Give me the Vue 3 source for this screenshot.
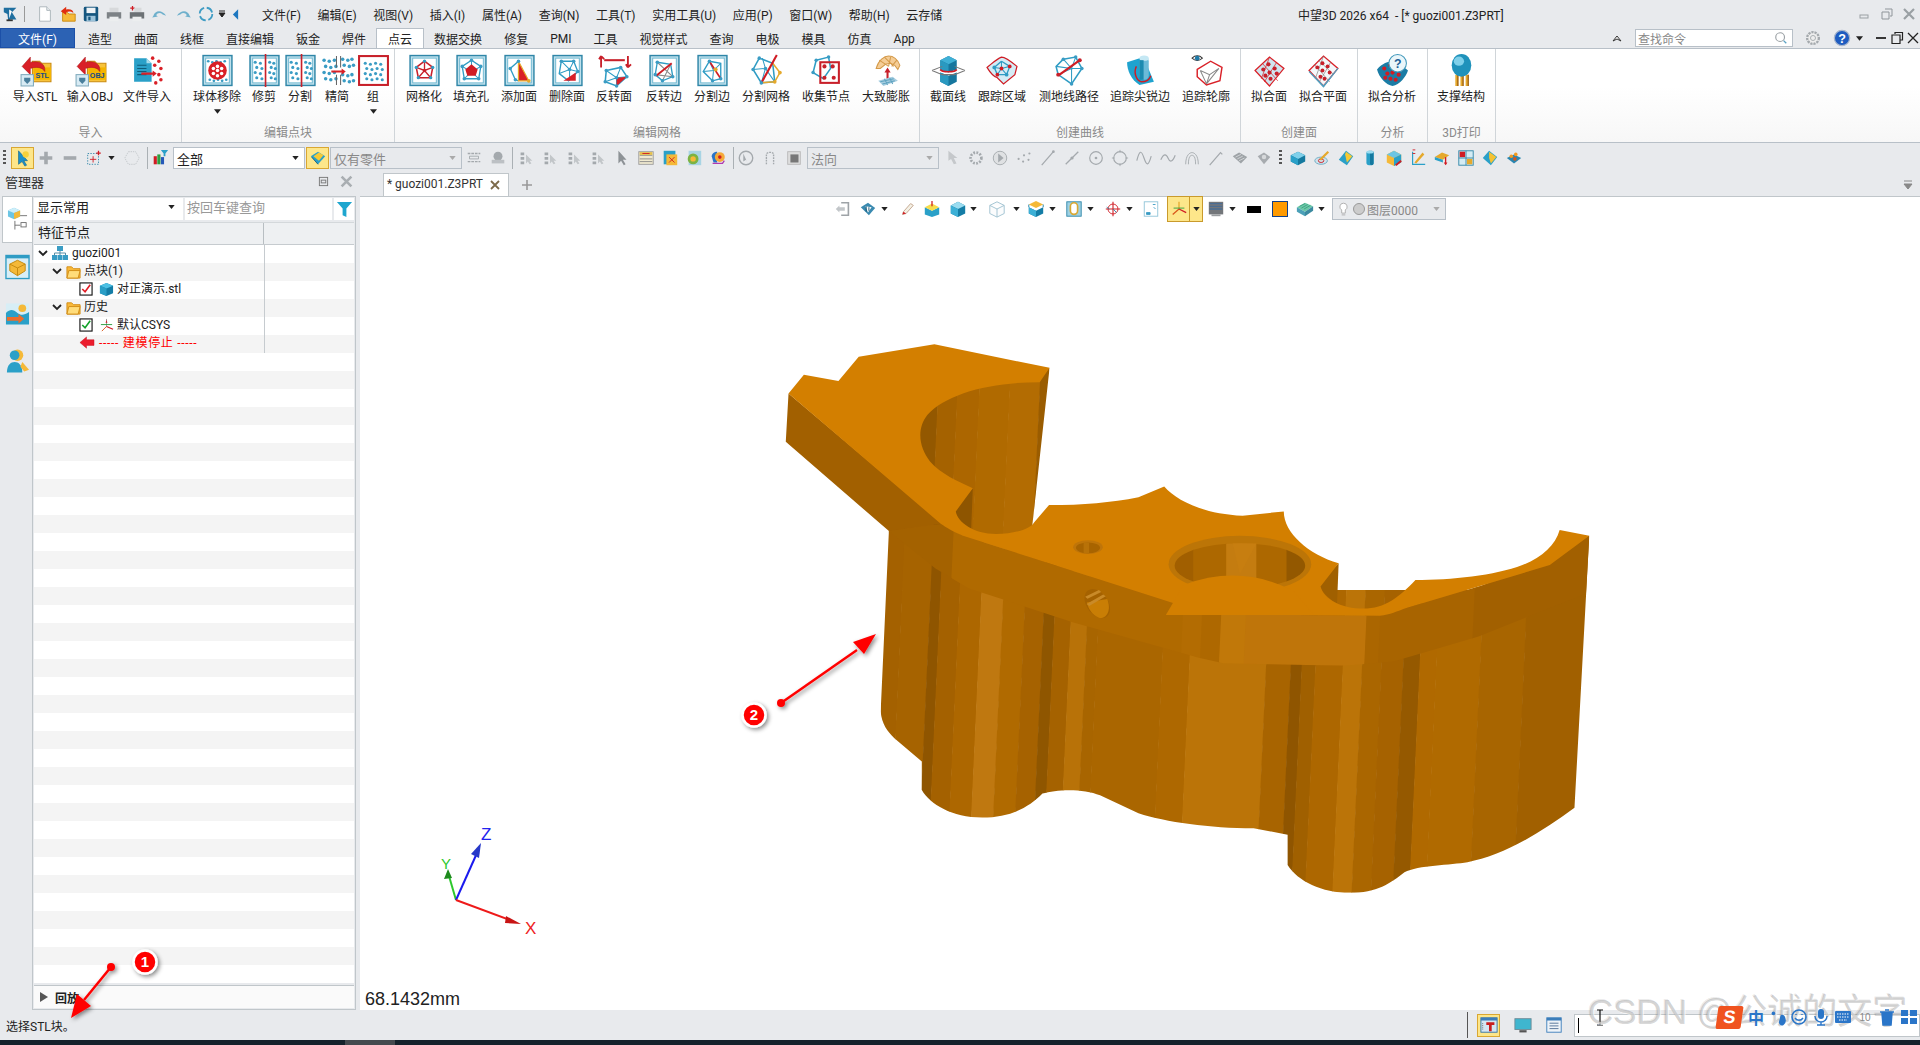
<script setup>
const dot = (x, y, r = 1.7, c = '#3a9cc4') => `<circle cx="${x}" cy="${y}" r="${r}" fill="${c}"/>`
const ln = (p, c = '#3a9cc4', w = 1.3) => `<polyline points="${p}" fill="none" stroke="${c}" stroke-width="${w}"/>`
const tile = (inner, b = '#2f86a8') => `<rect x="2" y="1.5" width="28" height="29" fill="#bfe0ec" stroke="${b}" stroke-width="1.4"/><rect x="4.6" y="4" width="22.8" height="24" fill="#fff" stroke="#5fb0cc" stroke-width=".8"/>${inner}`
const cloud = (xs, ys, r = 1.5) => xs.map((x, i) => ys.map((y, j) => dot(x + (j % 2) * 1.5, y + (i % 2), r)).join('')).join('')
const folderB = '<path d="M13 7h7l2 2h9v18H13z" fill="#f8c33a" stroke="#c98a10"/><rect x="14" y="13" width="17" height="12" fill="#f4b400"/>'
const redBack = '<path d="M3 12l8-9v5c8-2 15 1 14 9-2-4-8-5-14-3v6z" fill="#d92027" stroke="#a5141a" stroke-width=".5"/>'
const smallBox = '<rect x="2" y="20" width="12" height="11" fill="#d8ebf4" stroke="#7fa9bc"/><path d="M5 23h6v3l-3 3-3-3z" fill="#4a7f9c"/>'
const imp = t => folderB + `<text x="22.5" y="23" font-size="7" font-weight="700" text-anchor="middle" fill="#124a8a" font-family="Liberation Sans">${t}</text>` + redBack + smallBox
const R = {
  stl: imp('STL'), obj: imp('OBJ'),
  fimp: '<path d="M3 4h12l5 5v18H3z" fill="#2aa0c8"/><path d="M15 4l5 5h-5z" fill="#a8dcec"/><path d="M6 11h9M6 14h9M6 17h9M6 20h9" stroke="#0e5c7a"/><path d="M10 18h11v-2l4 3-4 3v-2H10z" fill="#d92027"/>' + [[21, 4], [27, 7], [23, 11], [29, 14], [27, 20], [29, 25], [24, 28]].map(p => dot(p[0], p[1], 1.7, '#d92027')).join(''),
  sphere: tile(cloud([7, 11, 15, 19, 23], [7, 25], 1.3) + '<circle cx="16" cy="16" r="9" fill="#d92027"/>' + [[16, 12], [12, 14], [20, 14], [16, 16], [12, 19], [20, 19], [16, 21]].map(p => dot(p[0], p[1], 1.7, '#fff')).join('')),
  trim: '<rect x="1" y="2" width="15" height="27" fill="#d7ecf3"/>' + tile(cloud([7, 12, 21, 25], [8, 13, 18, 23]) + ln('17,0 17,32', '#c8202a', 1.6)),
  split: tile(cloud([7, 12, 21, 25], [8, 13, 18, 23]) + ln('17,0 17,32', '#c8202a', 1.6)),
  slim: cloud([3, 8, 13], [6, 12, 18, 24], 1.7) + cloud([21, 26, 30], [5, 11, 20, 26], 1.7) + '<path d="M15 2v11M15 20v10M19 2v11M19 20v10" stroke="#666"/><path d="M10 16h10v-2l4 3-4 3v-2H10z" fill="#d92027"/>',
  group: '<rect x="2" y="2" width="28" height="28" fill="#fff" stroke="#c8202a" stroke-width="2"/>' + cloud([8, 13, 18, 23], [9, 14, 19, 24]),
  mesh: tile('<polyline points="16,7 24,13 22,23 10,23 8,13 16,7" fill="none" stroke="#c8202a" stroke-width="1.5"/><path d="M16 7v9M8 13l8 3 8-3M10 23l6-7 6 7" stroke="#c8202a" fill="none" stroke-width="1.3"/>' + dot(16, 7, 1.6, '#2f9cc4') + dot(24, 13, 1.6, '#2f9cc4') + dot(22, 23, 1.6, '#2f9cc4') + dot(10, 23, 1.6, '#2f9cc4') + dot(8, 13, 1.6, '#2f9cc4') + dot(16, 16, 1.6, '#c8202a')),
  fill: tile('<polyline points="16,6 25,12 23,24 9,24 7,12 16,6" fill="none" stroke="#2f9cc4" stroke-width="1.3"/><path d="M16 6v5M7 12l5 3M25 12l-5 3M9 24l4-4M23 24l-4-4" stroke="#2f9cc4"/><path d="M16 10l6 5-2 6h-8l-2-6z" fill="#d01c24"/>' + dot(16, 6) + dot(25, 12) + dot(23, 24) + dot(9, 24) + dot(7, 12)),
  addf: tile('<path d="M15 7l10 19H15z" fill="#d92027"/><polyline points="15,7 7,14 12,25 15,26" fill="none" stroke="#2f9cc4" stroke-width="1.3"/><polyline points="15,7 25,26 15,26 15,7" fill="none" stroke="#e5a92c" stroke-width="1.2"/>' + dot(15, 7) + dot(7, 14) + dot(12, 25) + dot(25, 26, 1.8, '#e5a92c')),
  delf: tile('<polyline points="10,7 22,7 26,17 17,26 8,19 10,7" fill="none" stroke="#2f9cc4" stroke-width="1.3"/><path d="M10 7l8 8 4-8M8 19l10-4 8 2M18 15v11" stroke="#2f9cc4" fill="none"/><path d="M12 26l12-8v8z" fill="#d92027"/>' + dot(10, 7) + dot(22, 7) + dot(26, 17) + dot(18, 15)),
  revf: '<path d="M3 2v11M3 2l-2 3M3 2l3 3M29 2v11M29 13l-2-3M29 13l3-3" stroke="#c8202a" stroke-width="1.8" fill="none"/><path d="M6 6h20" stroke="#c8202a" stroke-width="2"/><polyline points="8,16 22,13 28,22 18,31 7,27 8,16" fill="none" stroke="#2f9cc4" stroke-width="1.5"/><path d="M8 16l10 7 4-10M7 27l11-4v8M18 23l10-1" stroke="#2f9cc4" fill="none"/><path d="M18 23l10-1-10 9z" fill="#d92027"/>' + dot(8, 16) + dot(22, 13) + dot(28, 22) + dot(18, 31) + dot(7, 27) + dot(18, 23),
  reve: tile('<polyline points="9,8 22,10 24,22 14,26 7,20 9,8" fill="none" stroke="#2f9cc4" stroke-width="1.3"/><path d="M9 8l15 14M14 26l8-16M7 20l17 2" stroke="#8a8a8a" fill="none"/><path d="M8 21L23 9" stroke="#d01c24" stroke-width="1.8"/>' + dot(9, 8) + dot(24, 22) + dot(14, 26) + dot(7, 20)),
  spe: tile('<polyline points="13,7 24,9 24,24 16,26 7,17 13,7" fill="none" stroke="#2f9cc4" stroke-width="1.3"/><path d="M13 7l4 9-10 1M17 16l-1 10M17 16l7-7" stroke="#2f9cc4" fill="none"/><path d="M13 7l11 17" stroke="#d01c24" stroke-width="1.6"/>' + dot(19, 15, 2, '#e5a92c') + dot(13, 7) + dot(24, 24) + dot(16, 26)),
  spm: '<polyline points="9,4 22,9 24,27 11,28 3,15 9,4" fill="none" stroke="#2f9cc4" stroke-width="1.5"/><path d="M3 15l12-1-3-10M15 14l-4 14M15 14l9 13" stroke="#2f9cc4" fill="none"/><path d="M22 9l7 9-5 9-13 1" stroke="#e5a92c" fill="none" stroke-width="1.5"/><path d="M26 1L11 28" stroke="#d01c24" stroke-width="2"/>' + dot(9, 4) + dot(3, 15) + dot(15, 14) + dot(11, 28) + dot(29, 18, 1.8, '#e5a92c') + dot(24, 27, 1.8, '#e5a92c'),
  col: '<polyline points="6,6 18,3 20,14 13,24 3,18 6,6" fill="none" stroke="#2f9cc4" stroke-width="1.5"/><rect x="10" y="8" width="18" height="20" fill="none" stroke="#c8202a" stroke-width="2"/>' + dot(14, 12, 2, '#c8202a') + dot(22, 12, 2, '#c8202a') + dot(14, 23, 2, '#c8202a') + dot(23, 23, 2, '#c8202a') + dot(6, 6) + dot(18, 3) + dot(3, 18),
  infl: '<path d="M6 14C8 6 14 2 18 2c5 0 9 4 11 9l-2 4-3-4-4-2-5 1-5 4z" fill="#f5cd96" stroke="#d49a4a"/><path d="M9 6l9 6M14 3l9 9M20 3l-2 9M26 6l-5 6" stroke="#d49a4a" fill="none"/><path d="M16 24v-6h-2l3-5 3 5h-2v6z" fill="#c8202a"/><path d="M8 26l14-4 5 4-14 5z" fill="#a6cde0"/><path d="M10 27l13-3M12 29l12-3M14 24l3 6M19 23l3 6" stroke="#5fa3c0"/>',
  sect: '<path d="M8 6l8-4 8 4v9l-8 3-8-3z" fill="#16769e"/><path d="M8 6l8 4 8-4-8-4z" fill="#3fb0d6"/><path d="M8 6l8 4v8l-8-3z" fill="#2a99c0"/><path d="M8 18l8 3 8-3v9l-8 4-8-4z" fill="#16769e"/><path d="M8 18l8 3v10l-8-4z" fill="#2a99c0"/><path d="M0 16l10-4M32 16l-10-4M0 16l10 4h12l10-4" stroke="#777" fill="none"/><path d="M8 15c2 3 14 3 16 0" stroke="#d01c24" stroke-width="1.6" fill="none"/>',
  trace: '<path d="M1 13C6 9 10 5 15 3c4 0 9 4 15 9l-2 8-11 9-6-6c-4-1-7-5-10-10z" fill="#d4ecf5" stroke="#d01c24" stroke-width="1.2"/><polyline points="15,7 23,12 20,20 11,20 8,13 15,7" fill="none" stroke="#2f9cc4" stroke-width="1.3"/><path d="M15 7v7M8 13l7 1 8-2M11 20l4-6 5 6" stroke="#2f9cc4" fill="none"/>' + dot(15, 14, 1.9, '#d01c24') + dot(8, 13, 1.8, '#2f9cc4') + dot(23, 12, 1.8, '#d01c24') + dot(11, 20, 1.8, '#d01c24') + dot(20, 20, 1.8, '#2f9cc4'),
  geod: '<polyline points="10,5 22,3 28,14 18,29 5,20 3,12 10,5" fill="none" stroke="#2f9cc4" stroke-width="1.5"/><path d="M10 5l8 9-15-2M22 3l-4 11 10 0M18 14l0 15M5 20l13-6" stroke="#2f9cc4" fill="none"/><path d="M5 21L26 6" stroke="#d01c24" stroke-width="2.2"/>' + dot(10, 5) + dot(22, 3) + dot(28, 14) + dot(18, 29) + dot(5, 20, 1.9, '#c8202a') + dot(26, 6, 1.9, '#c8202a'),
  sharp: '<path d="M3 8l16-5 10 24-14 3C7 25 3 16 3 8z" fill="#1fa3cf"/><rect x="15" y="3" width="9" height="22" rx="4" fill="#6bbad8"/><ellipse cx="19.500" cy="4" rx="4.500" ry="2.500" fill="#c5e8f4"/><rect x="15" y="6" width="4" height="19" fill="#1c8ab0"/><path d="M12 12c-3 6 0 14 5 15 5 0 8-3 9-6" stroke="#d01c24" stroke-width="1.4" fill="none"/>',
  outline: '<path d="M2 4c3-3 7-3 10 0-3 3-7 3-10 0z" fill="#fff" stroke="#333"/><circle cx="7" cy="4" r="2.300" fill="#1f7aa8"/><polygon points="7,15 20,7 31,13 29,26 16,30 7,22" fill="#fff" stroke="#d92027" stroke-width="1.4"/><path d="M10 16l9 4 9-6M19 20l-3 9M10 16l6 13M28 14l-12 15" stroke="#888" fill="none"/>',
  fitf: '<path d="M2 16L16 3l14 11-14 17z" fill="#cfe6f0" stroke="#d92027" stroke-width="1.2"/><path d="M9 9l15 17M16 3l-8 21M23 8L11 27" stroke="#d92027" stroke-width=".7" fill="none"/>' + [[10, 15], [15, 10], [21, 14], [16, 18], [23, 19], [12, 21], [17, 24]].map(p => dot(p[0], p[1], 2, '#c8202a')).join(''),
  fitp: '<path d="M2 16L16 2l14 12-14 17z" fill="#f4f8fa" stroke="#d92027" stroke-width="1.2"/><path d="M7 10l15 17M11 6l15 14M16 2L8 24M23 8L12 27" stroke="#777" stroke-width=".6" fill="none"/><path d="M2 17l14 14 14-17-14 18z" fill="#8cc7dd" stroke="#4fa0c0"/>' + [[10, 13], [15, 9], [20, 12], [15, 16], [22, 18], [13, 22], [17, 24]].map(p => dot(p[0], p[1], 1.9, '#c8202a')).join(''),
  ana: '<path d="M1 15C6 9 12 7 16 7c4 2 10 4 15 9-2 6-8 14-15 15C10 30 3 23 1 15z" fill="#1a7ca5"/>' + [[8, 14], [14, 11], [19, 13], [24, 15], [11, 19], [16, 18], [22, 20], [14, 24], [19, 25], [9, 23]].map(p => dot(p[0], p[1], 2, '#d01c24')).join('') + '<circle cx="21" cy="9" r="8.500" fill="#eaf6fa" stroke="#3f97ba"/><text x="21" y="13.500" text-anchor="middle" font-size="12" font-weight="700" font-family="Liberation Sans" fill="#1c5f96">?</text>',
  sup: '<path d="M10 20h3v11h-3zM15 21h3v10h-3zM20 20h3v11h-3z" fill="#e5a92c"/><path d="M12 20h1v11h-1zM17 21h1v10h-1zM22 20h1v11h-1z" fill="#8a4d0c"/><ellipse cx="16" cy="11" rx="9.500" ry="11" fill="#1f92bb"/><ellipse cx="13.500" cy="7" rx="5" ry="4.500" fill="#7fd0ea"/>'
}
const ribbon = [
  { l: '导入', a: 0, b: 182, items: [['导入STL', 35, 'stl', 44], ['输入OBJ', 90, 'obj', 44], ['文件导入', 147, 'fimp']] },
  { l: '编辑点块', a: 182, b: 395, items: [['球体移除', 217, 'sphere', 0, 1], ['修剪', 264, 'trim'], ['分割', 300, 'split'], ['精简', 337, 'slim'], ['组', 373, 'group', 0, 1]] },
  { l: '编辑网格', a: 395, b: 920, items: [['网格化', 424, 'mesh'], ['填充孔', 471, 'fill'], ['添加面', 519, 'addf'], ['删除面', 567, 'delf'], ['反转面', 614, 'revf'], ['反转边', 664, 'reve'], ['分割边', 712, 'spe'], ['分割网格', 766, 'spm'], ['收集节点', 826, 'col'], ['大致膨胀', 886, 'infl']] },
  { l: '创建曲线', a: 920, b: 1241, items: [['截面线', 948, 'sect'], ['跟踪区域', 1002, 'trace'], ['测地线路径', 1069, 'geod'], ['追踪尖锐边', 1140, 'sharp'], ['追踪轮廓', 1206, 'outline']] },
  { l: '创建面', a: 1241, b: 1358, items: [['拟合面', 1269, 'fitf'], ['拟合平面', 1323, 'fitp']] },
  { l: '分析', a: 1358, b: 1428, items: [['拟合分析', 1392, 'ana']] },
  { l: '3D打印', a: 1428, b: 1496, items: [['支撑结构', 1461, 'sup']] }
].map(g => {
  let right = g.a
  return {
    ...g, w: g.b - g.a,
    items: g.items.map(i => {
      const w = i[3] || i[0].length * 12
      const m = i[1] - w / 2 - right
      right = i[1] + w / 2
      return { t: i[0], ic: R[i[2]], w, m, drop: i[4] }
    })
  }
})
const menus = ['文件(F)', '编辑(E)', '视图(V)', '插入(I)', '属性(A)', '查询(N)', '工具(T)', '实用工具(U)', '应用(P)', '窗口(W)', '帮助(H)', '云存储']
const tabs = ['造型', '曲面', '线框', '直接编辑', '钣金', '焊件', '点云', '数据交换', '修复', 'PMI', '工具', '视觉样式', '查询', '电极', '模具', '仿真', 'App']

const G = '#a4a9ad'
const T = {
  sel: '<path d="M5 2v15l4-3 3 5 2-1-3-5h4z" fill="#1a8fc9" stroke="#0b5d86" stroke-width=".6"/><circle cx="13" cy="6" r="3.500" fill="#f7d23a"/>',
  plus: `<path d="M8 3h4v5h5v4h-5v5H8v-5H3V8h5z" fill="${G}"/>`,
  minus: `<rect x="3" y="8" width="14" height="4" fill="${G}"/>`,
  drect: '<rect x="3" y="5" width="12" height="12" fill="none" stroke="#2f86a8" stroke-dasharray="1.500 1.500"/><path d="M9 8v7M5.500 11.500h7" stroke="#d01c24"/><path d="M15 2v5M12.500 4.500h5" stroke="#d01c24" stroke-width="1.4"/>',
  hex: `<polygon points="6,3 14,3 18,10 14,17 6,17 2,10" fill="none" stroke="#c2c6c9" stroke-dasharray="1.500 1"/>`,
  filt: '<rect x="3" y="8" width="3.500" height="9" fill="#d01c24"/><rect x="7" y="6" width="3.500" height="11" fill="#2e9e3f"/><rect x="11" y="9" width="3.500" height="8" fill="#2458b8"/><path d="M11 1h8l-3 4v3h-2V5z" fill="#2aa0c8"/>',
  ybtn: '<path d="M2 8l8-5 8 5-8 9z" fill="#2aa0c8"/><path d="M5 8l6-4 5 3-5 6z" fill="#f6c933"/><path d="M3 9l7 8" stroke="#155b7a"/>',
  g1: `<path d="M3 5h14M3 14h14" stroke="${G}" stroke-width="1.500" stroke-dasharray="3 1"/><path d="M5 8h10v3H5z" fill="none" stroke="${G}"/>`,
  g2: `<circle cx="10" cy="8" r="5" fill="${G}"/><rect x="3" y="12" width="14" height="4" fill="#bcc0c4"/>`,
  g3: `<path d="M4 4h4v3H4zM4 9h4v3H4zM4 14h4v3H4z" fill="${G}"/><path d="M10 6v10l2-2 2 3 2-1-2-3h3z" fill="#c2c6c9"/>`,
  cur: `<path d="M6 2v14l3-3 3 5 2-1-3-5h4z" fill="#8d9296"/>`,
  list: '<rect x="2" y="3" width="16" height="14" fill="#f0ead0" stroke="#9a9a9a"/><path d="M3 7h14M3 11h14M3 14h14" stroke="#888"/><rect x="3" y="3.500" width="14" height="3" fill="#e5c04a"/><path d="M6 5h8" stroke="#d01c24"/>',
  box1: '<rect x="3" y="2" width="13" height="15" fill="#2aa0c8"/><rect x="6" y="6" width="12" height="12" fill="#f5b938"/><path d="M9 9l6 6M15 9l-6 6" stroke="#d01c24"/>',
  box2: '<rect x="4" y="2" width="14" height="16" fill="#a8d4e4"/><circle cx="9" cy="11" r="6" fill="#7cb342"/><circle cx="9" cy="11" r="3" fill="#f5b938"/>',
  box3: '<path d="M3 8c0-3 3-5 6-5v12H5z" fill="#2a74c8"/><circle cx="12" cy="9" r="5.500" fill="#f5a938"/><circle cx="12" cy="9" r="2" fill="#d01c24"/><path d="M4 16h11l2-3" stroke="#b03ab0" fill="none" stroke-width="1.500"/>',
  g4: `<circle cx="10" cy="10" r="7.500" fill="none" stroke="${G}" stroke-width="1.500"/><path d="M7 5v9l3-2 2 4" fill="${G}"/>`,
  g5: `<path d="M6 17V6c0-3 8-3 8 0v11" fill="none" stroke="${G}" stroke-width="1.500" stroke-dasharray="2 1"/>`,
  g6: '<rect x="3" y="3" width="14" height="14" fill="#ddd" stroke="#b8b8b8"/><rect x="6" y="6" width="9" height="9" fill="#777"/>',
  g7: `<path d="M6 2v11l3-2 3 6 3-1-3-6h4z" fill="#c5c8cb"/>`,
  g8: `<circle cx="10" cy="10" r="6" fill="none" stroke="${G}" stroke-width="3" stroke-dasharray="2 1.500"/>`,
  g9: `<circle cx="10" cy="10" r="7.500" fill="#dfe1e3" stroke="${G}"/><path d="M8 5l6 5-6 5z" fill="${G}"/>`,
  g10: `<circle cx="4" cy="11" r="1.200" fill="${G}"/><circle cx="10" cy="7" r="1.200" fill="${G}"/><circle cx="16" cy="5" r="1.200" fill="${G}"/><circle cx="9" cy="14" r="1.200" fill="${G}"/><circle cx="15" cy="12" r="1.200" fill="${G}"/>`,
  g11: `<path d="M3 18L16 3" stroke="${G}" stroke-width="1.400"/><circle cx="16" cy="3" r="1.500" fill="${G}"/>`,
  g12: `<path d="M3 17L17 3" stroke="${G}" stroke-width="1.400"/><circle cx="10" cy="10" r="1.800" fill="${G}"/>`,
  g13: `<circle cx="10" cy="10" r="7" fill="none" stroke="${G}" stroke-width="1.300"/><circle cx="10" cy="10" r="1.500" fill="${G}"/>`,
  g14: `<circle cx="10" cy="10" r="7" fill="none" stroke="${G}" stroke-width="1.300"/><path d="M10 1v3M10 16v3M1 10h3M16 10h3" stroke="${G}"/>`,
  g15: `<path d="M2 13c3-12 5-12 8-3s5 9 8-2" fill="none" stroke="${G}" stroke-width="1.300"/>`,
  g16: `<path d="M2 12c3-7 6-7 8-2s5 5 8-3" fill="none" stroke="${G}" stroke-width="1.300"/>`,
  g17: `<path d="M3 17C3 6 8 4 10 4s7 2 7 13M6 17C6 9 8 7 10 7s4 2 4 10" fill="none" stroke="${G}"/>`,
  g18: `<path d="M3 18L15 4l2 2" stroke="${G}" stroke-width="1.400" fill="none"/>`,
  g19: `<path d="M2 8l7-4 9 5-7 7z" fill="#9ea3a7"/><path d="M5 9l6-3M7 11l6-3M9 13l6-3" stroke="#d6d8da"/>`,
  g20: `<path d="M3 8l7-4 7 5-7 8z" fill="#a7abaf"/><circle cx="10" cy="9" r="2.500" fill="#d6d8da"/>`,
  c1: '<path d="M10 3l8 4v7l-8 4-8-4V7z" fill="#14799f"/><path d="M10 3l8 4-8 4-8-4z" fill="#7fd0ea"/><path d="M2 7l8 4v7l-8-4z" fill="#2aa0c8"/>',
  c2: '<ellipse cx="9" cy="13" rx="7" ry="4" fill="#cfe3ec" stroke="#6aa9c2"/><ellipse cx="9" cy="13" rx="3" ry="2" fill="none" stroke="#d01c24"/><path d="M8 12L17 3" stroke="#e5a92c" stroke-width="2.500"/>',
  c3: '<path d="M10 2l8 6-7 10-9-6z" fill="#2aa0c8"/><path d="M10 3l7 5-6 7-2-9z" fill="#f6c933"/>',
  c4: '<rect x="6" y="2" width="8" height="16" rx="3" fill="#2aa0c8"/><rect x="10" y="2" width="4" height="16" rx="2" fill="#14799f"/><ellipse cx="10" cy="3.500" rx="4" ry="1.500" fill="#9adcf0"/>',
  c5: '<path d="M10 2l8 4v9l-8 4-8-4V6z" fill="#f5b938"/><path d="M10 2l8 4-8 4-8-4z" fill="#6cc5e4"/><path d="M10 10l8-4v9l-8 4z" fill="#2aa0c8"/><path d="M12 18l6-5" stroke="#d01c24" stroke-width="2"/>',
  c6: '<path d="M4 3v14h14" stroke="#2aa0c8" fill="none" stroke-width="1.300"/><path d="M6 15L15 4l2 2-9 10z" fill="#e5a92c"/><path d="M4 5h3M4 1h3" stroke="#d01c24"/>',
  c7: '<path d="M2 9l8-5 8 3-7 5z" fill="#e5a92c"/><path d="M2 9l9 3v3L2 12z" fill="#2aa0c8"/><path d="M14 9v8" stroke="#d01c24" stroke-width="1.500"/><path d="M12 15h4l-2 3z" fill="#d01c24"/>',
  c8: '<rect x="2" y="2" width="16" height="16" fill="#d5ecf4" stroke="#2f86a8"/><path d="M10 2v16M2 10h16" stroke="#2f86a8"/><rect x="3" y="3" width="6" height="6" fill="#d01c24"/><rect x="11" y="11" width="6" height="6" fill="#e5a92c"/>',
  c9: '<path d="M9 2l9 7-7 9-9-8z" fill="#2aa0c8"/><path d="M9 3l8 6-6 7-2-6z" fill="#f5c233"/>',
  c10: '<path d="M2 10l8-4 8 4-8 6z" fill="#2a86b0"/><circle cx="7" cy="8" r="2" fill="#f59a1f"/><circle cx="12" cy="6" r="2" fill="#f59a1f"/><circle cx="11" cy="11" r="2" fill="#d8561a"/>'
}
const V = {
  exit: '<path d="M8 3h8v14H8" fill="none" stroke="#9ea3a7" stroke-width="1.800"/><path d="M2 10l4-4v2h6v4H6v2z" fill="#c2c6c9"/>',
  win: '<path d="M2 8l8-5 8 6-7 8z" fill="#3a8ab0"/><path d="M7 7l7 1-4 6z" fill="#fff"/><path d="M8 7v6M11 8v4" stroke="#14506c"/>',
  pen: '<path d="M5 16l1-3 8-9 3 2-8 9z" fill="#f4f1e6" stroke="#c2a38a"/><path d="M5 16l1-3 3 2z" fill="#d01c24"/>',
  ybox: '<path d="M2 8l8 4 8-4v8l-8 3-8-3z" fill="#2aa0c8"/><path d="M2 8l8-4 8 4-8 4z" fill="#f6dc4a"/><path d="M10 1v6" stroke="#d01c24" stroke-width="1.400"/>',
  bbox: '<path d="M10 2l8 4v9l-8 4-8-4V6z" fill="#147da6"/><path d="M10 2l8 4-8 4-8-4z" fill="#9adcf0"/><path d="M2 6l8 4v9l-8-4z" fill="#3cb0d6"/>',
  wbox: '<path d="M10 2l8 4v9l-8 4-8-4V6zM2 6l8 4 8-4M10 10v9" fill="#fbfcfd" stroke="#9cc0cf"/>',
  hbox: '<path d="M10 1l8 4-8 4-8-4z" fill="#f5b938"/><path d="M2 8l8 4 8-4v7l-8 4-8-4z" fill="#147da6"/><path d="M2 8l8 4v7l-8-4z" fill="#3cb0d6"/><path d="M2 5v3M18 5v3" stroke="#147da6"/>',
  ring: '<rect x="2" y="2" width="16" height="16" fill="#9ed1e4" stroke="#2f86a8"/><rect x="6" y="3" width="8" height="13" rx="4" fill="#fff" stroke="#d9a732" stroke-width="1.800"/>',
  tgt: '<circle cx="10" cy="10" r="5.500" fill="none" stroke="#d01c24"/><path d="M10 2v16M2 10h16" stroke="#d01c24" stroke-width="1.200"/><path d="M3 8l3 2M10 10l4 4" stroke="#2f86a8"/>',
  pic: '<rect x="2.500" y="2" width="15" height="16" fill="#fff" stroke="#8fc4d8"/><path d="M5 14h4v2H5zM12 5h3M13 8l2 2" stroke="#3a9cc4" fill="#3a9cc4"/>',
  axis: '<path d="M10 10V2" stroke="#e5a92c" stroke-width="1.400"/><path d="M10 10l-7 6" stroke="#d8561a" stroke-width="1.400"/><path d="M10 10l8 4" stroke="#d01c24" stroke-width="1.400"/><path d="M4 9h12" stroke="#2e9e3f"/>',
  mon: '<rect x="2" y="2" width="16" height="14" fill="#73767a"/><path d="M3 4h14M3 7h14M3 10h14" stroke="#4b6d93" stroke-width="1.500"/><rect x="5" y="16" width="10" height="2" fill="#9a9da0"/>',
  lay: '<path d="M1 8l9-5 9 4-9 6z" fill="#6cc9a8"/><path d="M1 8l9 5v5l-9-5z" fill="#4ba0b8"/><path d="M10 13l9-6v5l-9 6z" fill="#3b8aa0"/><path d="M4 7l6-3M6 9l7-4M9 10l7-4" stroke="#3d9e80"/>'
}
const flow = (list, start) => {
  let right = start
  return list.map(i => {
    const m = i.c - i.w / 2 - right
    right = i.c + i.w / 2
    return { ...i, m }
  })
}
const s = (c, ic, w = 24) => ({ k: 's', c, w, ic: T[ic] })
const centers = (a, keys) => keys.map((ic, i) => s(a + i * 24, ic))
const toolItems = flow([
  { k: 'grip', c: 5, w: 4 }, { k: 'on', c: 23.5, w: 23, ic: T.sel }, s(47, 'plus'), s(71, 'minus'), s(95, 'drect'), { k: 'ar', c: 112, w: 10 }, s(133, 'hex'),
  { k: 'sep', c: 148, w: 1 }, s(161, 'filt'),
  { k: 'combo', c: 240, w: 132, t: '全部' }, { k: 'on', c: 318.5, w: 23, ic: T.ybtn }, { k: 'combo', c: 397, w: 132, t: '仅有零件', dis: 1 },
  s(475, 'g1'), s(499, 'g2'), { k: 'sep', c: 513, w: 1 },
  ...centers(527, ['g3', 'g3', 'g3', 'g3', 'cur', 'list', 'box1', 'box2', 'box3']),
  { k: 'sep', c: 734, w: 1 },
  ...centers(747, ['g4', 'g5', 'g6']),
  { k: 'combo', c: 874, w: 132, t: '法向', dis: 1 },
  ...centers(953, ['g7', 'g8', 'g9', 'g10', 'g11', 'g12', 'g13', 'g14', 'g15', 'g16', 'g17', 'g18', 'g19', 'g20']),
  { k: 'grip', c: 1282, w: 4 },
  ...centers(1300, ['c1', 'c2', 'c3', 'c4', 'c5', 'c6', 'c7', 'c8', 'c9', 'c10'])
], 0)
const v = (c, ic, w = 22) => ({ k: 's', c, w, ic: V[ic] })
const a = c => ({ k: 'ar', c, w: 8 })
const viewItems = flow([
  v(843, 'exit'), v(868, 'win'), a(884), v(907, 'pen'), v(932, 'ybox'), v(958, 'bbox'), a(973), v(997, 'wbox'), a(1016), v(1036, 'hbox'), a(1052), v(1074, 'ring'), a(1090), v(1113, 'tgt'), a(1129), v(1151, 'pic'),
  { k: 'yel', c: 1185, w: 36, ic: V.axis }, v(1216, 'mon'), a(1232), { k: 'black', c: 1254, w: 14 }, { k: 'orange', c: 1280, w: 16 }, v(1305, 'lay'), a(1321), { k: 'layer', c: 1389, w: 114 }
], 832)

const treeIcons = {
  org: '<rect x="5" y="1" width="6" height="5" fill="#3a9cc4"/><rect x="0" y="10" width="5" height="5" fill="#3a9cc4"/><rect x="5.500" y="10" width="5" height="5" fill="#3a9cc4"/><rect x="11" y="10" width="5" height="5" fill="#3a9cc4"/><path d="M8 6v2M2.500 10V8h11v2M8 8v2" stroke="#5a8ea6" fill="none"/>',
  folder: '<path d="M1 3h5l2 2h7v10H1z" fill="#f9b93a" stroke="#d18c14"/><path d="M3 7h12l-2 8H1z" fill="#ffdc7a" stroke="#d18c14"/>',
  chkR: '<rect x="1" y="1" width="13" height="13" fill="#fff" stroke="#111" stroke-width="1.200"/><path d="M3.500 7.500l3 3L12 3" fill="none" stroke="#e01b24" stroke-width="1.700"/>',
  chkG: '<rect x="1" y="1" width="13" height="13" fill="#fff" stroke="#111" stroke-width="1.200"/><path d="M3.500 7.500l3 3L12 3" fill="none" stroke="#12a12a" stroke-width="1.700"/>',
  cube: '<path d="M8 1l7 3v8l-7 3-7-3V4z" fill="#147da6"/><path d="M8 1l7 3-7 3-7-3z" fill="#4cc0e4"/><path d="M1 4l7 3v8l-7-3z" fill="#2a9ec6"/>',
  csys: '<path d="M8 9V1" stroke="#999"/><path d="M8 9l-5 5" stroke="#d8561a"/><path d="M8 9l7 3" stroke="#d01c24" stroke-width="1.300"/><path d="M2 7h12" stroke="#2e9e3f"/><path d="M8 2l-1 3h2z" fill="#d01c24"/>',
  back: '<path d="M1 7l7-6v3h8v6H8v3z" fill="#ec1c2c" stroke="#c01420" stroke-width=".5"/>'
}
const tree = [
  { ind: 4, chev: 1, ic: 'org', t: 'guozi001', cls: 'root' },
  { ind: 18, chev: 1, ic: 'folder', t: '点块(1)' },
  { ind: 45, chk: 'chkR', ic: 'cube', t: '对正演示.stl' },
  { ind: 18, chev: 1, ic: 'folder', t: '历史' },
  { ind: 45, chk: 'chkG', ic: 'csys', t: '默认CSYS' },
  { ind: 45, ic: 'back', t: '----- 建模停止 -----', cls: 'red', nochk: 1 }
]
const SL = 0.03
const bandPts = (x1, x2, y0, y1, yr) => {
  const f = (x, y) => x - SL * (y - yr)
  return `${f(x1, y0)},${y0} ${f(x2, y0)},${y0} ${f(x2, y1)},${y1} ${f(x1, y1)},${y1}`
}
const mk = (list, y0, y1, yr) => list.map(([x1, x2, fill]) => ({ pts: bandPts(x1, x2 + 1, y0, y1, yr), fill }))
const frontBands = mk([[180, 250, '#a46100'], [250, 302, '#a66300'], [302, 320, '#8f5500'], [320, 355, '#a46100'], [355, 395, '#ad6700'], [395, 435, '#bf7810'], [435, 475, '#b06a00'], [475, 510, '#a66200'], [510, 530, '#8f5600'], [530, 560, '#a56200'], [560, 590, '#b87208'], [590, 610, '#a86500'], [610, 730, '#aa6600'], [730, 780, '#ae6800'], [780, 920, '#bb7408'], [920, 965, '#a86400'], [965, 985, '#8f5500'], [985, 1010, '#a06000'], [1010, 1060, '#ad6700'], [1060, 1095, '#bb7408'], [1095, 1130, '#aa6600'], [1130, 1170, '#a66200'], [1170, 1200, '#955900'], [1200, 1230, '#b06900'], [1230, 1310, '#b06a00'], [1310, 1390, '#a86500'], [1390, 1540, '#a16000']], 450, 1600, 1000)
const chamBands = mk([[200, 345, '#a46200'], [345, 770, '#b06a00'], [770, 805, '#b36c02'], [805, 840, '#ae6800'], [840, 885, '#c17809'], [885, 1105, '#bf750a'], [1105, 1130, '#ab6600'], [1130, 1300, '#a86400'], [1300, 1540, '#a26000']], 500, 950, 800)
const wallBands = mk([[280, 320, '#935800'], [320, 355, '#a56200'], [355, 395, '#ac6600'], [395, 450, '#b06a00'], [450, 505, '#b36c02'], [505, 540, '#9a5c00']], 60, 580, 300)
const holeBands = [[750, 790, '#a15f00'], [790, 850, '#ad6800'], [850, 905, '#c47c10'], [905, 960, '#ad6800'], [960, 1000, '#935800']]
const silhouette = 'M235,535 L220,1040 C222,1075 232,1095 245,1115 L295,1180 L295,1260 C310,1300 350,1337 405,1337 C455,1337 490,1310 515,1270 C540,1258 590,1255 620,1275 L690,1325 C740,1350 820,1367 900,1367 L962,1385 L962,1470 C980,1515 1025,1548 1075,1548 C1125,1548 1150,1520 1175,1490 C1200,1470 1260,1470 1290,1462 C1350,1445 1420,1385 1485,1310 L1512,548 L1300,700 L800,700 L400,500 Z'
const chamfer = '370,548 770,745 850,768 1130,772 1180,750 1440,630 1512,548 1506,710 1310,830 1155,900 1065,912 930,908 845,905 800,890 570,790 380,695 320,640 235,535 330,515'
const topFace = 'M52,150 L80,97 L143,115 L180,47 L318,12 L528,78 L510,118 C420,118 340,150 305,210 C285,250 290,300 310,340 C330,375 360,395 388,415 L357,480 C360,510 390,543 430,543 C470,543 495,525 500,510 L527,462 C590,462 640,455 690,440 L737,410 C760,450 810,488 880,492 L955,480 C955,540 1000,600 1055,625 L1022,690 C1028,725 1060,752 1100,752 C1140,752 1165,720 1195,672 C1260,672 1340,660 1390,630 C1425,610 1450,575 1458,532 L1512,548 L1440,630 L1180,750 C1160,760 1150,770 1130,772 L850,768 C810,765 790,755 770,745 L370,548 C350,535 340,525 330,515 Z'
</script>

<template>
  <div class="app">
    <div class="titlebar">
      <div class="quick">
        <svg class="qi" viewBox="0 0 20 20"><path d="M2 3h14l-5 5 5 8H9l-2 2-1-8-4-2z" fill="#1f6fa0"/><path d="M8 5l3 2-3 8z" fill="#fff"/><path d="M5 16h7v2H5z" fill="#333"/></svg>
        <span class="qbar"></span>
        <svg class="qi q1" viewBox="0 0 20 20"><path d="M4 2h8l4 4v12H4z" fill="#fff" stroke="#a9b2b8"/><path d="M12 2v4h4" fill="#e8edf0" stroke="#a9b2b8"/></svg>
        <svg class="qi" viewBox="0 0 20 20"><path d="M4 8h5l2 2h7v8H4z" fill="#f5b938" stroke="#c98a10"/><path d="M2 7l6-5v3c5-1 8 1 8 4-3-2-5-2-8-1v3z" fill="#e02e10"/></svg>
        <svg class="qi" viewBox="0 0 20 20"><rect x="2" y="2" width="16" height="16" rx="1.500" fill="#15567f"/><rect x="5" y="3" width="10" height="6" fill="#eef2f5"/><rect x="5" y="12" width="10" height="6" fill="#9cc3da"/><rect x="7" y="13" width="2.500" height="4" fill="#15567f"/></svg>
        <svg class="qi" viewBox="0 0 20 20"><rect x="5" y="3" width="10" height="5" fill="#d7d9db"/><path d="M2 8h16v7H2z" fill="#7d8286"/><rect x="5" y="13" width="10" height="5" fill="#eceeef"/></svg>
        <svg class="qi" viewBox="0 0 20 20"><path d="M5 1v5M2.500 3.500h5" stroke="#d01c24" stroke-width="1.400"/><rect x="7" y="3" width="8" height="5" fill="#d7d9db"/><path d="M2 8h16v7H2z" fill="#6c7175"/><rect x="5" y="13" width="10" height="5" fill="#eceeef"/></svg>
        <svg class="qi" viewBox="0 0 20 20"><path d="M3 13C4 6 12 5 17 11l-4-1C10 8 7 9 6 12l2 1-6 2z" fill="#6fb0cc" transform="rotate(8 10 10)"/></svg>
        <svg class="qi" viewBox="0 0 20 20"><path d="M17 13C16 6 8 5 3 11l4-1c3-2 6-1 7 2l-2 1 6 2z" fill="#6fb0cc" transform="rotate(-8 10 10)"/></svg>
        <svg class="qi" viewBox="0 0 20 20"><circle cx="10" cy="10" r="7" fill="none" stroke="#3f9cc4" stroke-width="2" stroke-dasharray="8 3"/></svg>
        <svg class="qs" viewBox="0 0 8 8"><path d="M1 1h6M1 3h6L4 7z" stroke="#222" fill="#222"/></svg>
        <svg class="qb" viewBox="0 0 8 12"><path d="M7 0v12L1 6z" fill="#1d77c0"/></svg>
      </div>
      <div class="menus"><span v-for="m in menus" :key="m" class="menu">{{ m }}</span></div>
      <div class="doc">中望3D 2026 x64 &nbsp;- [* guozi001.Z3PRT]</div>
      <div class="wins">
        <svg class="wc" viewBox="0 0 14 14"><rect x="2" y="8" width="8" height="3" fill="none" stroke="#9aa0a4"/></svg>
        <svg class="wc" viewBox="0 0 14 14"><path d="M5 2h7v7h-2M2 5h7v7H2z" fill="none" stroke="#8f959a"/></svg>
        <svg class="wc" viewBox="0 0 14 14"><path d="M2 2l10 10M12 2L2 12" stroke="#9aa0a4" stroke-width="2.200"/></svg>
      </div>
    </div>
    <div class="tabrow">
      <div class="filetab">文件(F)</div>
      <div class="tabs"><span v-for="t in tabs" :key="t" class="tab" :class="{ active: t === '点云' }">{{ t }}</span></div>
      <div class="tabright">
        <svg class="up" viewBox="0 0 12 12"><path d="M2 9l4-5 4 5-4-2z" fill="#fff" stroke="#333"/></svg>
        <div class="search"><span>查找命令</span><svg viewBox="0 0 16 16"><circle cx="7" cy="7" r="5" fill="#fff" stroke="#9aa0a4" stroke-width="1.300"/><path d="M11 11l3 3" stroke="#5ba2c4" stroke-width="1.600"/></svg></div>
        <svg class="gear" viewBox="0 0 20 20"><circle cx="10" cy="10" r="6.500" fill="#eee" stroke="#a4a9ad" stroke-width="2.600" stroke-dasharray="2.500 1"/><circle cx="10" cy="10" r="2.800" fill="none" stroke="#a4a9ad"/></svg>
        <svg class="help" viewBox="0 0 20 20"><circle cx="10" cy="10" r="8.500" fill="#1e5cc0" stroke="#a8b6cc" stroke-width="1.400"/><text x="10" y="15" text-anchor="middle" font-size="14" font-weight="700" fill="#fff" font-family="Liberation Sans">?</text></svg>
        <svg class="drop" viewBox="0 0 8 5"><path d="M0 0h8L4 5z" fill="#222"/></svg>
        <svg class="wc2" viewBox="0 0 14 14"><path d="M2 7h10" stroke="#222" stroke-width="1.800"/></svg>
        <svg class="wc2" viewBox="0 0 14 14"><path d="M5 3V1.500h7.500V9H10M2 4h8v8.500H2z" fill="none" stroke="#222" stroke-width="1.200"/></svg>
        <svg class="wc2" viewBox="0 0 14 14"><path d="M2 2l10 10M12 2L2 12" stroke="#222" stroke-width="1.300"/></svg>
      </div>
    </div>
    <div class="ribbon">
      <div v-for="g in ribbon" :key="g.l" class="group" :style="{ width: g.w + 'px' }">
        <div class="items">
          <div v-for="i in g.items" :key="i.t" class="item" :style="{ width: i.w + 'px', marginLeft: i.m + 'px' }">
            <svg class="ric" viewBox="0 0 32 32" v-html="i.ic"></svg>
            <span class="rlabel">{{ i.t }}</span>
            <svg v-if="i.drop" class="rdrop" viewBox="0 0 8 5"><path d="M0 0h8L4 5z" fill="#222"/></svg>
          </div>
        </div>
        <div class="glabel">{{ g.l }}</div>
      </div>
    </div>
    <div class="toolbar">
      <template v-for="(t, n) in toolItems" :key="n">
        <span v-if="t.k === 'grip'" class="grip" :style="{ marginLeft: t.m + 'px' }"></span>
        <span v-else-if="t.k === 'sep'" class="sep" :style="{ marginLeft: t.m + 'px' }"></span>
        <span v-else-if="t.k === 'ar'" class="slot" :style="{ marginLeft: t.m + 'px', width: t.w + 'px' }"><svg class="arr" viewBox="0 0 8 5"><path d="M0 0h8L4 5z" fill="#222"/></svg></span>
        <span v-else-if="t.k === 'combo'" class="combo" :class="{ dis: t.dis }" :style="{ marginLeft: t.m + 'px', width: t.w + 'px' }">{{ t.t }}<svg class="arr" viewBox="0 0 8 5"><path d="M0 0h8L4 5z" :fill="t.dis ? '#aaa' : '#222'"/></svg></span>
        <span v-else class="slot" :class="{ on: t.k === 'on' }" :style="{ marginLeft: t.m + 'px', width: t.w + 'px' }"><svg class="tic" viewBox="0 0 20 20" v-html="t.ic"></svg></span>
      </template>
    </div>
    <div class="work">
      <div class="manager">
        <div class="mhead">
          <span>管理器</span>
          <svg viewBox="0 0 12 12" class="mbtn"><rect x="1.500" y="1.500" width="9" height="9" fill="none" stroke="#777"/><rect x="3.500" y="4.500" width="5" height="3" fill="none" stroke="#777"/></svg>
          <svg viewBox="0 0 12 12" class="mbtn m2"><path d="M1.500 1.500l9 9M10.500 1.500l-9 9" stroke="#a9aeb2" stroke-width="2.400"/></svg>
        </div>
        <div class="mbody">
          <div class="side">
            <div class="stab active"><svg viewBox="0 0 26 30"><path d="M9 1l7 3v7l-7 3-7-3V4z" fill="#6cc5e4"/><path d="M9 1l7 3-7 3-7-3z" fill="#cdeef9"/><path d="M9 7l7-3v7l-7 3z" fill="#f2b93a"/><path d="M16 10h8M10 16v10M10 21h6" stroke="#666" fill="none"/><rect x="17" y="18" width="6" height="5" fill="none" stroke="#666"/></svg></div>
            <div class="stab"><svg viewBox="0 0 26 26"><rect x="1" y="1" width="24" height="24" fill="#d9eef6" stroke="#2f9cc4" stroke-width="1.400"/><rect x="1" y="1" width="24" height="3" fill="#2f9cc4"/><path d="M13 6l8 4v7l-8 5-8-5v-7z" fill="#f5b938" stroke="#c68a10"/><path d="M5 10l8 4 8-4M13 14v8" stroke="#c68a10" fill="none"/></svg></div>
            <div class="stab"><svg viewBox="0 0 26 26"><rect x="1" y="2" width="24" height="22" fill="#d7eef6"/><circle cx="18" cy="7" r="4" fill="#f5b938"/><path d="M1 12c5-5 8-3 12 0s7 2 12-1v13H1z" fill="#2aa0c8"/><path d="M2 16h12v-3l6 5-6 5v-3H2z" fill="#ed6d2a"/></svg></div>
            <div class="stab"><svg viewBox="0 0 26 26"><circle cx="13" cy="7" r="6" fill="#f5b938"/><circle cx="10" cy="7" r="5" fill="#2aa0c8"/><path d="M2 25c0-8 4-11 8-11s8 3 8 11z" fill="#2aa0c8"/><path d="M18 14l7 8-5 2-4-5z" fill="#f5b938"/></svg></div>
          </div>
          <div class="panel">
            <div class="frow">
              <div class="fcombo">显示常用<svg class="arr" viewBox="0 0 8 5"><path d="M0 0h8L4 5z" fill="#222"/></svg></div>
              <div class="fsearch">按回车键查询</div>
              <div class="ffun"><svg viewBox="0 0 18 18"><path d="M1 1h16l-6 7v9l-4-2V8z" fill="#1ea6cf"/></svg></div>
            </div>
            <div class="thead"><span class="th1">特征节点</span><span class="th2"></span></div>
            <div class="tree">
              <div v-for="r in tree" :key="r.t" class="row" :style="{ paddingLeft: r.ind + 'px' }">
                <svg v-if="r.chev" class="chev" viewBox="0 0 10 7"><path d="M1 1l4 4 4-4" fill="none" stroke="#222" stroke-width="1.800"/></svg>
                <svg v-if="r.chk" class="chk" viewBox="0 0 15 15" v-html="treeIcons[r.chk]"></svg>
                <svg class="tri" :class="{ org: r.ic === 'org' }" viewBox="0 0 16 16" v-html="treeIcons[r.ic]"></svg>
                <span class="rtext" :class="r.cls">{{ r.t }}</span>
              </div>
              <span class="coldiv"></span>
            </div>
            <div class="replay"><svg viewBox="0 0 8 10"><path d="M0 0l8 5-8 5z" fill="#555"/></svg><b>回放</b></div>
          </div>
        </div>
      </div>
      <div class="right">
        <div class="doctabs">
          <div class="doctab"><span>* guozi001.Z3PRT</span><svg viewBox="0 0 10 10"><path d="M1 1l8 8M9 1l-8 8" stroke="#7c6a4a" stroke-width="1.800"/></svg></div>
          <svg class="newtab" viewBox="0 0 12 12"><path d="M6 1v10M1 6h10" stroke="#999" stroke-width="1.600"/></svg>
          <svg class="tabmenu" viewBox="0 0 10 10"><path d="M1 1h8M1 4h8L5 9z" stroke="#888" fill="#888"/></svg>
        </div>
        <div class="viewport">
          <div class="vtools">
            <template v-for="(t, n) in viewItems" :key="n">
              <span v-if="t.k === 'ar'" class="slot" :style="{ marginLeft: t.m + 'px', width: t.w + 'px' }"><svg class="arr" viewBox="0 0 8 5"><path d="M0 0h8L4 5z" fill="#222"/></svg></span>
              <span v-else-if="t.k === 'yel'" class="vyel" :style="{ marginLeft: t.m + 'px', width: t.w + 'px' }"><svg class="tic" viewBox="0 0 20 20" v-html="t.ic"></svg><i></i><svg class="arr" viewBox="0 0 8 5"><path d="M0 0h8L4 5z" fill="#222"/></svg></span>
              <span v-else-if="t.k === 'black'" class="vblack" :style="{ marginLeft: t.m + 'px', width: t.w + 'px' }"></span>
              <span v-else-if="t.k === 'orange'" class="vorange" :style="{ marginLeft: t.m + 'px', width: t.w + 'px' }"></span>
              <span v-else-if="t.k === 'layer'" class="vlayer" :style="{ marginLeft: t.m + 'px', width: t.w + 'px' }">
                <svg viewBox="0 0 10 16" class="bulb"><path d="M5 1a4 4 0 0 1 2 7.500V12H3V8.500A4 4 0 0 1 5 1z" fill="#fff" stroke="#aaa"/><path d="M3 14h4" stroke="#aaa"/></svg>
                <i></i>图层0000<svg class="arr" viewBox="0 0 8 5"><path d="M0 0h8L4 5z" fill="#aaa"/></svg>
              </span>
              <span v-else class="slot" :style="{ marginLeft: t.m + 'px', width: t.w + 'px' }"><svg class="tic" viewBox="0 0 20 20" v-html="t.ic"></svg></span>
            </template>
          </div>
          <svg class="model" viewBox="0 0 1568 1568" preserveAspectRatio="none">
            <defs>
              <clipPath id="cBody"><path :d="silhouette" /></clipPath>
              <clipPath id="cCham"><polygon :points="chamfer" /></clipPath>
              <clipPath id="cWall"><polygon points="528,78 495,540 430,565 335,510 280,260 320,120 510,100" /></clipPath>
              <clipPath id="cHole"><ellipse cx="875" cy="632" rx="119" ry="63" /></clipPath>
            </defs>
            <polygon points="52,150 47,285 235,535 240,700 345,700 345,530" fill="#a26000" />
            <g clip-path="url(#cBody)"><polygon v-for="(b, n) in frontBands" :key="n" :points="b.pts" :fill="b.fill" /></g>
            <g clip-path="url(#cCham)"><polygon v-for="(b, n) in chamBands" :key="n" :points="b.pts" :fill="b.fill" /></g>
            <g clip-path="url(#cWall)"><polygon v-for="(b, n) in wallBands" :key="n" :points="b.pts" :fill="b.fill" /></g>
            <polygon points="388,415 345,490 385,530" fill="#8e5500" />
            <polygon points="1055,625 1052,742 1015,690" fill="#a06000" />
            <path :d="topFace" fill="#d37f00" />
            <ellipse cx="875" cy="628" rx="130" ry="80" fill="#bc7507" />
            <g clip-path="url(#cHole)"><rect v-for="(h, n) in holeBands" :key="n" :x="h[0]" y="560" :width="h[1] - h[0] + 1" height="150" :fill="h[2]" /></g>
            <polygon points="862,570 905,570 875,655" fill="#c77e10" />
            <path d="M772,686 Q875,626 972,702 L1010,770 L740,770 Z" fill="#d37f00" />
            <ellipse cx="598" cy="580" rx="27" ry="19" fill="#bf7509" />
            <ellipse cx="598" cy="582" rx="22" ry="15" fill="#a86400" />
            <rect x="590" y="567" width="10" height="30" fill="#b87208" />
            <ellipse cx="615" cy="738" rx="21" ry="42" transform="rotate(-16 615 738)" fill="#a56200" />
            <path d="M596,735 L633,725 C642,760 630,782 618,778 C605,770 598,750 596,735 Z" fill="#c97e05" />
            <path d="M595,722 L620,703 M598,742 L628,715" stroke="#c98a28" stroke-width="7" />
          </svg>
          <svg class="axis" viewBox="0 0 110 125">
            <path d="M26 86L19 62" stroke="#2cc82c" stroke-width="2" /><path d="M18 55l-4 10 8-1z" fill="#1d8a1d" />
            <path d="M26 86L47 39" stroke="#1a1aee" stroke-width="2" /><path d="M51 29l-10 11 8 4z" fill="#2738c8" />
            <path d="M26 86l54 20" stroke="#ee1a1a" stroke-width="2" /><path d="M91 110L76 102l-1 7z" fill="#c81414" />
            <text x="51" y="26" class="ax" fill="#2222ee">Z</text>
            <text x="11" y="55" class="ax sm" fill="#2cc82c">Y</text>
            <text x="95" y="120" class="ax" fill="#ee2222">X</text>
          </svg>
          <div class="measure">68.1432mm</div>
        </div>
      </div>
    </div>
    <div class="status">
      <span class="stext">选择STL块。</span>
      <span class="ssep"></span>
      <span class="son"><svg viewBox="0 0 20 20"><rect x="1" y="2" width="18" height="16" fill="#d5e6f2" stroke="#2c6fa8"/><rect x="1" y="2" width="18" height="3" fill="#3b7dba"/><path d="M7 7h9v3h-3v7h-3v-7H7z" fill="#c81e1e"/><path d="M3 8v8" stroke="#666" stroke-dasharray="1 1"/></svg></span>
      <svg class="sic" viewBox="0 0 20 20"><rect x="1" y="3" width="18" height="12" fill="#3fb6cf" stroke="#6d8a96"/><path d="M6 17h8" stroke="#555" stroke-width="2.500"/></svg>
      <svg class="sic" viewBox="0 0 20 20"><rect x="2" y="2" width="16" height="16" fill="#eef3f8" stroke="#3b7dba"/><rect x="2" y="2" width="16" height="3" fill="#3b7dba"/><path d="M5 8h10M5 11h10M5 14h10" stroke="#4d6d94"/></svg>
      <div class="cmd"><i></i></div>
    </div>
    <div class="taskbar"><i></i></div>
    <svg class="overlay" viewBox="0 0 1920 1045">
      <defs><filter id="sh" x="-30%" y="-30%" width="160%" height="160%"><feDropShadow dx="2" dy="2" stdDeviation="2" flood-color="#000" flood-opacity=".45" /></filter></defs>
      <g filter="url(#sh)">
        <circle cx="111" cy="967" r="4" fill="#f00" /><path d="M111 967L84 1000" stroke="#f00" stroke-width="2.500" />
        <path d="M71 1018L77 994L91 1006Z" fill="#f00" />
        <circle cx="145" cy="962" r="11.500" fill="#f00" stroke="#fff" stroke-width="2.500" />
        <circle cx="781" cy="703" r="4" fill="#f00" /><path d="M781 703L857 650" stroke="#f00" stroke-width="2.500" />
        <path d="M876 634L853 642L864 654Z" fill="#f00" />
        <circle cx="754" cy="715" r="11.500" fill="#f00" stroke="#fff" stroke-width="2.500" />
      </g>
      <text x="145" y="967" class="num">1</text>
      <text x="754" y="720" class="num">2</text>
      <path d="M1597 1010h6M1600 1010v15M1597 1025h6" stroke="#111" stroke-width="1.200" fill="none" />
    </svg>
    <div class="wmark">CSDN @公诚的文字</div>
    <div class="ime">
      <span class="sg">S</span>
      <b>中</b>
      <svg viewBox="0 0 10 10"><circle cx="3" cy="3" r="1" fill="#2a75c8" /><path d="M7 4a2 3 0 1 1-1 4" fill="#2a75c8" /></svg>
      <svg viewBox="0 0 18 18"><circle cx="9" cy="9" r="7" fill="none" stroke="#2a75c8" stroke-width="1.600" /><path d="M5 10c2 3 6 3 8 0M6 6v1M12 6v1" stroke="#2a75c8" stroke-width="1.400" fill="none" /></svg>
      <svg viewBox="0 0 18 18"><rect x="6" y="1" width="6" height="10" rx="3" fill="#2a75c8" /><path d="M3 8a6 6 0 0 0 12 0M9 14v3M5 17h8" stroke="#2a75c8" stroke-width="1.400" fill="none" /></svg>
      <svg viewBox="0 0 18 18"><rect x="1" y="3" width="16" height="12" rx="1" fill="#2a75c8" /><path d="M3 6h12M3 9h12M5 12h8" stroke="#fff" stroke-dasharray="1.500 1" /></svg>
      <span class="ten">10</span>
      <svg viewBox="0 0 18 18"><path d="M4 5h10l-1 12H5zM2 4h14M7 2h4" stroke="#2a75c8" fill="#2a75c8" stroke-width="1.500" /></svg>
      <svg viewBox="0 0 18 18"><rect x="1" y="2" width="7" height="6" fill="#2a75c8" /><rect x="10" y="2" width="7" height="6" fill="#2a75c8" /><rect x="1" y="10" width="7" height="6" fill="#2a75c8" /><rect x="10" y="10" width="7" height="6" fill="#2a75c8" /></svg>
    </div>
  </div>
</template>

<style>
html, body { margin: 0; background: #e8eaed; }
</style>

<style scoped>
.app { position: relative; width: 1920px; height: 1045px; overflow: hidden; display: flex; flex-direction: column; background: #e8eaed; font: 12px Roboto, "Noto Sans CJK SC", sans-serif; color: #222; }
svg { display: block; flex: none; overflow: visible; }
.titlebar { height: 28px; display: flex; align-items: center; flex: none; }
.quick { display: flex; align-items: center; width: 262px; padding-left: 2px; box-sizing: border-box; gap: 5px; }
.qi { width: 18px; height: 18px; }
.q1 { margin-left: 6px; }
.qbar { width: 1px; height: 16px; background: #999; margin-left: -1px; }
.qs { width: 8px; height: 8px; margin-left: -2px; }
.qb { width: 7px; height: 11px; margin-left: 1px; }
.menus { display: flex; gap: 16.6px; width: 1036px; }
.menu { white-space: nowrap; }
.doc { white-space: nowrap; width: 280px; }
.wins { display: flex; margin-left: auto; gap: 8px; padding-right: 4px; }
.wc { width: 14px; height: 14px; }
.tabrow { height: 20px; display: flex; align-items: stretch; flex: none; position: relative; z-index: 1; }
.filetab { width: 75px; background: #2c62b4; border: 1px solid #1c50a8; box-sizing: border-box; color: #fff; display: flex; align-items: center; justify-content: center; }
.tabs { display: flex; margin-left: 2px; }
.tab { padding: 0 11px; display: flex; align-items: center; white-space: nowrap; border: solid transparent; border-width: 1px 1px 0; margin: 0 -1px; }
.tab.active { background: #fff; border-color: #b8c0c8; }
.tabright { margin-left: auto; display: flex; align-items: center; }
.up { width: 12px; height: 12px; margin-right: 12px; }
.search { width: 158px; height: 18px; background: #fff; border: 1px solid #b8c0c8; box-sizing: border-box; display: flex; align-items: center; justify-content: space-between; padding: 0 4px 0 2px; color: #888; }
.search svg { width: 14px; height: 14px; }
.gear { width: 18px; height: 18px; margin-left: 11px; }
.help { width: 18px; height: 18px; margin-left: 11px; }
.drop { width: 7px; height: 5px; margin-left: 5px; }
.wc2 { width: 14px; height: 14px; margin-left: 2px; }
.drop + .wc2 { margin-left: 11px; }
.ribbon { height: 95px; flex: none; display: flex; background: linear-gradient(#fff 40%, #f7f7f7); border-top: 1px solid #b8c0c8; border-bottom: 1px solid #b8c0c8; box-sizing: border-box; }
.group { height: 100%; box-sizing: border-box; border-right: 1px solid #d0d5d9; display: flex; flex-direction: column; position: relative; flex: none; }
.items { display: flex; height: 75px; }
.item { display: flex; flex-direction: column; align-items: center; flex: none; }
.ric { width: 33px; height: 33px; margin-top: 5px; }
.rlabel { white-space: nowrap; margin-top: 2px; line-height: 17px; }
.rdrop { width: 7px; height: 5px; margin-top: 3px; }
.glabel { text-align: center; color: #8a8a8a; line-height: 18px; }
.toolbar { height: 30px; flex: none; display: flex; align-items: center; background: #e8eaed; }
.slot { height: 22px; display: flex; align-items: center; justify-content: center; flex: none; box-sizing: border-box; }
.slot.on { background: #fde68a; border: 1px solid #d9a732; }
.tic { width: 18px; height: 18px; }
.arr { width: 7px; height: 4px; }
.grip { width: 3px; height: 16px; flex: none; background: repeating-linear-gradient(#555 0 2px, transparent 2px 4px); }
.sep { width: 1px; height: 22px; background: #aab0b4; flex: none; }
.combo { height: 22px; flex: none; box-sizing: border-box; background: #fff; border: 1px solid #b8c0c8; display: flex; align-items: center; justify-content: space-between; padding: 0 5px 0 3px; font-size: 13px; }
.combo.dis { background: #e8eaed; color: #888; }
.work { height: 837px; flex: none; display: flex; min-height: 0; }
.manager { width: 358px; flex: none; display: flex; flex-direction: column; }
.mhead { height: 23px; flex: none; display: flex; align-items: center; padding: 0 0 6px 5px; font-size: 13px; color: #333; box-sizing: border-box; }
.mhead span { flex: 1; }
.mbtn { width: 11px; height: 11px; margin-right: 11px; }
.m2 { width: 13px; height: 13px; margin-right: 5px; }
.mbody { flex: 1; display: flex; min-height: 0; }
.side { width: 30px; flex: none; display: flex; flex-direction: column; align-items: flex-start; margin-left: 2px; }
.stab { width: 30px; height: 47px; display: flex; align-items: center; justify-content: center; box-sizing: border-box; flex: none; }
.stab.active { background: #fff; border: 1px solid #c0c6ca; border-right: 0; }
.stab svg { width: 25px; height: 26px; }
.panel { width: 324px; flex: none; display: flex; flex-direction: column; border: 1px solid #c0c6ca; box-sizing: border-box; background: #e8eaed; padding: 1px; height: 814px; }
.frow { height: 22px; flex: none; display: flex; gap: 2px; background: #e8eaed; }
.fcombo { width: 149px; background: #fff; display: flex; align-items: center; justify-content: space-between; padding: 0 8px 5px 3px; box-sizing: border-box; font-size: 13px; }
.fsearch { width: 147px; background: #fff; color: #999; display: flex; align-items: center; padding: 0 0 5px 2px; box-sizing: border-box; font-size: 13px; }
.ffun { flex: 1; background: #fff; display: flex; align-items: center; justify-content: center; }
.ffun svg { width: 17px; height: 17px; }
.thead { height: 23px; flex: none; display: flex; margin-top: 2px; background: #eef0f2; border-top: 1px solid #d4d8db; border-bottom: 1px solid #c6cbcf; box-sizing: border-box; }
.th1 { width: 230px; border-right: 1px solid #b8bec2; padding: 0 0 5px 4px; display: flex; align-items: center; box-sizing: border-box; font-size: 13px; }
.tree { flex: 1; position: relative; background: repeating-linear-gradient(#fff 0 18px, #f4f4f4 18px 36px); min-height: 0; }
.row { height: 18px; display: flex; align-items: center; box-sizing: border-box; white-space: nowrap; position: relative; padding-bottom: 2px; }
.chev { width: 10px; height: 7px; margin-right: 4px; }
.chk { width: 14px; height: 14px; margin-right: 6px; }
.tri { width: 15px; height: 15px; margin-right: 3px; }
.tri.org { width: 16px; height: 16px; margin-right: 4px; }
.rtext { line-height: 18px; }
.rtext.red { color: #f00; margin-left: 2px; letter-spacing: .7px; }
.coldiv { position: absolute; left: 230px; top: 0; height: 108px; width: 1px; background: #c6cbcf; }
.replay { height: 22px; flex: none; margin-top: 2px; border-top: 1px solid #c0c6ca; background: #fafafa; display: flex; align-items: center; padding-left: 6px; gap: 7px; }
.replay svg { width: 8px; height: 10px; }
.replay b { font-size: 12px; }
.right { flex: 1; display: flex; flex-direction: column; min-width: 0; margin-left: 2px; }
.doctabs { height: 23px; flex: none; display: flex; align-items: flex-end; position: relative; }
.doctab { margin-left: 23px; width: 126px; height: 23px; background: #fff; border: 1px solid #c0c6ca; border-bottom: 0; box-sizing: border-box; display: flex; align-items: center; justify-content: flex-end; gap: 7px; padding-right: 8px; color: #333; }
.doctab span { white-space: nowrap; padding-bottom: 2px; }
.doctab svg { width: 10px; height: 10px; }
.newtab { width: 12px; height: 12px; margin: 0 0 5px 12px; }
.tabmenu { width: 10px; height: 10px; position: absolute; right: 7px; bottom: 6px; }
.viewport { height: 814px; flex: none; background: #fff; position: relative; border-top: 1px solid #c0c6ca; box-sizing: border-box; }
.vtools { height: 24px; display: flex; align-items: center; position: relative; z-index: 1; padding-left: 472px; }
.vyel { height: 26px; flex: none; background: #fde68a; border: 1px solid #c99a2c; box-sizing: border-box; display: flex; align-items: center; }
.vyel .tic { margin-left: 2px; }
.vyel i { width: 1px; height: 100%; background: #c99a2c; margin: 0 3px 0 1px; }
.vblack { height: 7px; background: #000; flex: none; }
.vorange { height: 16px; background: #ff9a00; border: 1px solid #12408a; box-sizing: border-box; flex: none; }
.vlayer { height: 22px; flex: none; background: #e8eaed; border: 1px solid #b8c0c8; box-sizing: border-box; display: flex; align-items: center; color: #888; padding: 0 5px 0 6px; white-space: nowrap; }
.vlayer .bulb { width: 9px; height: 15px; }
.vlayer i { width: 12px; height: 12px; background: #ccc; border: 1px solid #999; border-radius: 50%; margin: 0 2px 0 5px; flex: none; box-sizing: border-box; }
.vlayer .arr { margin-left: auto; }
.model { position: absolute; left: 400px; top: 143px; width: 860px; height: 560px; }
.axis { position: absolute; left: 70px; top: 617px; width: 110px; height: 125px; }
.ax { font: 17px "Liberation Sans", sans-serif; }
.ax.sm { font-size: 15px; }
.measure { position: absolute; left: 5px; bottom: 0; font: 18px/22px "Liberation Sans", sans-serif; color: #222; }
.status { height: 30px; flex: none; display: flex; align-items: center; background: #e8eaed; }
.stext { width: 1467px; padding-left: 6px; box-sizing: border-box; flex: none; }
.ssep { width: 1px; height: 26px; background: #555; flex: none; }
.son { width: 23px; height: 23px; margin-left: 9px; background: #fde68a; border: 1px solid #d9a732; box-sizing: border-box; display: flex; align-items: center; justify-content: center; flex: none; }
.son svg { width: 18px; height: 18px; }
.sic { width: 18px; height: 18px; margin-left: 14px; }
.sic + .sic { margin-left: 13px; }
.cmd { flex: 1; height: 23px; margin-left: 11px; background: #fff; border: 1px solid #c0c6ca; box-sizing: border-box; display: flex; align-items: center; padding-left: 3px; }
.cmd i { width: 1px; height: 15px; background: #000; }
.taskbar { height: 5px; flex: none; background: #14212b; position: relative; }
.taskbar i { position: absolute; left: 345px; width: 50px; top: 0; bottom: 0; background: #44494e; }
.overlay { position: absolute; left: 0; top: 0; width: 1920px; height: 1045px; pointer-events: none; }
.num { font: 700 15px "Liberation Sans", sans-serif; fill: #fff; text-anchor: middle; }
.wmark { position: absolute; left: 1588px; top: 992px; font: 35px/40px "Liberation Sans", "Noto Sans CJK SC", sans-serif; color: rgba(120, 120, 120, .3); text-shadow: 1px 1px 0 rgba(255, 255, 255, .7), -1px -1px 0 rgba(110, 110, 110, .15); white-space: nowrap; }
.ime { position: absolute; left: 1717px; top: 1005px; height: 24px; display: flex; align-items: center; gap: 4px; pointer-events: none; }
.ime svg { width: 18px; height: 18px; }
.ime b { color: #2a75c8; font-size: 16px; margin-left: 2px; }
.ten { width: 18px; font: 10px "Liberation Sans", sans-serif; color: #8a8a8a; text-align: center; }
.sg { width: 25px; height: 23px; background: #f0531f; color: #fff; font: 700 18px/23px "Liberation Sans", sans-serif; text-align: center; transform: skewX(-8deg); border-radius: 2px; }
</style>
